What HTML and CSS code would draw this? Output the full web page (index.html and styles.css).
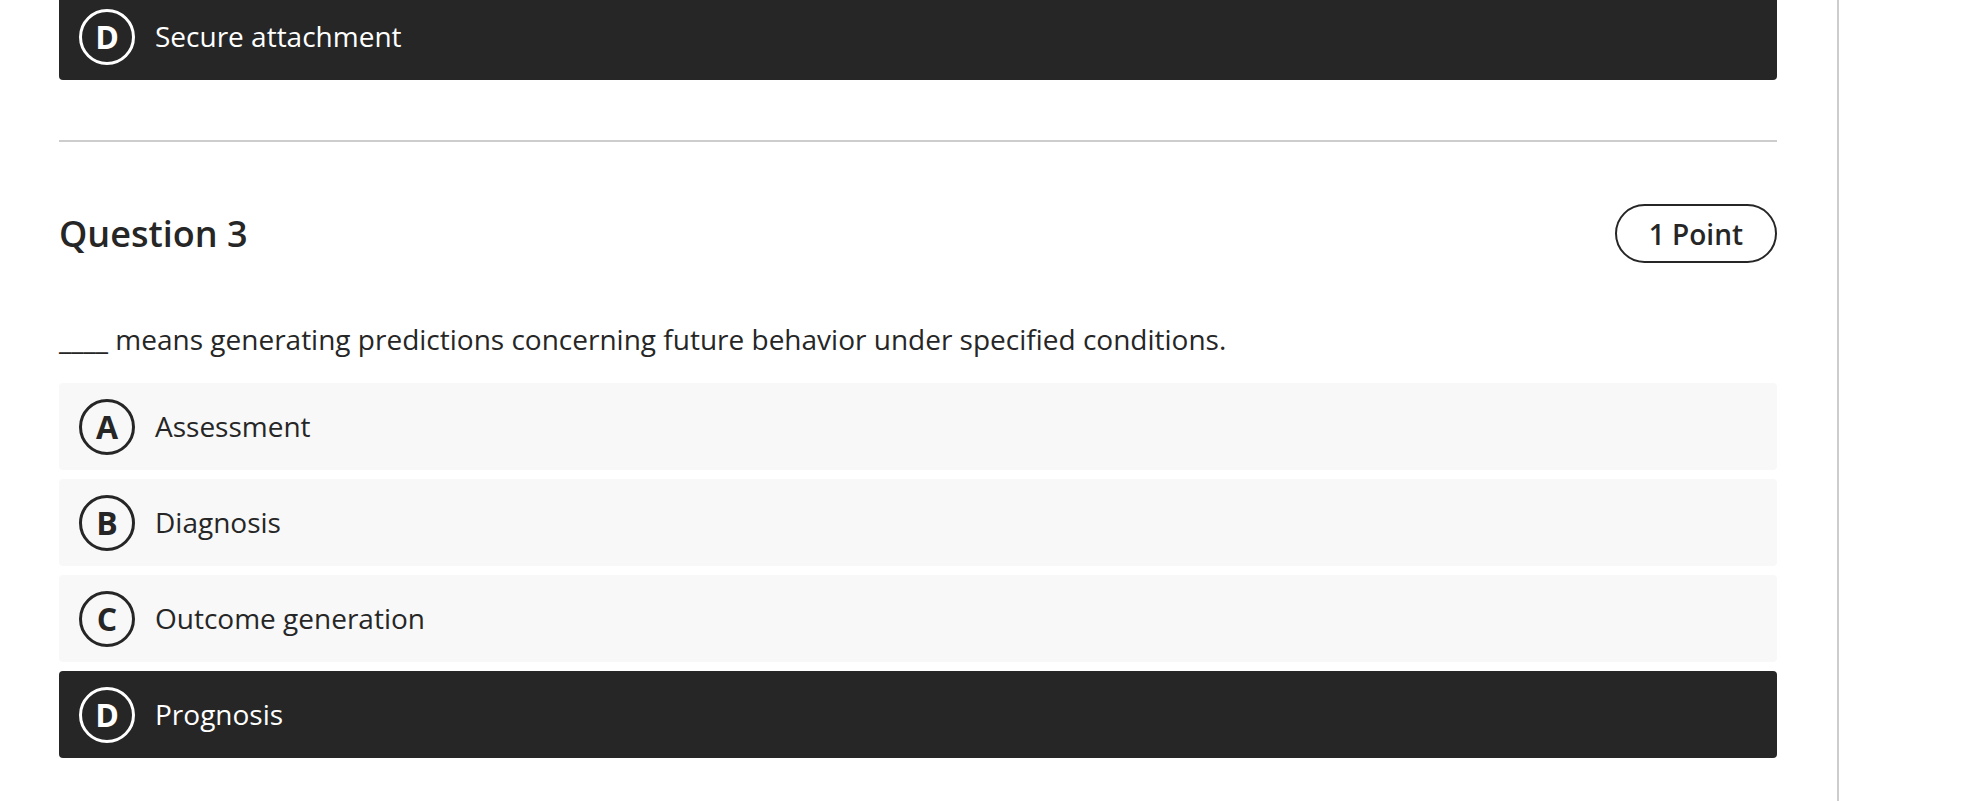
FILE: index.html
```html
<!DOCTYPE html>
<html lang="en">
<head>
    <meta charset="UTF-8">
    <meta name="viewport" content="width=device-width, initial-scale=1.0">
    <title>Quiz</title>
    <link rel="stylesheet" href="styles.css">
</head>
<body>
    <div class="page">
        <div class="content">
            <div class="question prev">
                <div class="options">
                    <div class="option selected">
                        <span class="letter">D</span>
                        <span class="label">Secure attachment</span>
                    </div>
                </div>
            </div>

            <hr class="divider">

            <div class="question">
                <div class="question-header">
                    <h2>Question 3</h2>
                    <span class="points">1 Point</span>
                </div>
                <p class="question-text">____ means generating predictions concerning future behavior under specified conditions.</p>
                <div class="options">
                    <div class="option">
                        <span class="letter">A</span>
                        <span class="label">Assessment</span>
                    </div>
                    <div class="option">
                        <span class="letter">B</span>
                        <span class="label">Diagnosis</span>
                    </div>
                    <div class="option">
                        <span class="letter">C</span>
                        <span class="label">Outcome generation</span>
                    </div>
                    <div class="option selected">
                        <span class="letter">D</span>
                        <span class="label">Prognosis</span>
                    </div>
                </div>
            </div>
        </div>
    </div>
</body>
</html>
```

FILE: styles.css
```css
html, body {
    margin: 0;
    padding: 0;
    background: #fff;
}
body {
    font-family: "Open Sans", "Noto Sans", sans-serif;
    color: #262626;
    overflow: hidden;
}
.page {
    display: flex;
    height: 801px;
}
.content {
    width: 1718px;
    padding: 0 60px 0 59px;
    border-right: 2px solid #cdcdcd;
    margin-top: -7px;
}
.options {
    display: flex;
    flex-direction: column;
    gap: 9px;
}
.option {
    display: flex;
    align-items: center;
    gap: 20px;
    height: 87px;
    padding-left: 20px;
    background-color: #f8f8f8;
    border-radius: 4px;
    font-size: 28px;
}
.option .label {
    padding-bottom: 2px;
}
.option.selected {
    background-color: #262626;
    color: #fff;
}
.letter {
    display: flex;
    align-items: center;
    justify-content: center;
    box-sizing: border-box;
    width: 56px;
    height: 56px;
    border: 3px solid #262626;
    border-radius: 50%;
    font-size: 32px;
    font-weight: 700;
}
.option.selected .letter {
    border-color: #fff;
}
.divider {
    border: 0;
    height: 2px;
    background-color: #cdcdcd;
    margin: 60px 0 62px;
}
.question-header {
    display: flex;
    align-items: center;
    justify-content: space-between;
}
.question-header h2 {
    margin: 0;
    font-size: 36px;
    font-weight: 600;
}
.points {
    box-sizing: border-box;
    height: 59px;
    padding: 0 32px;
    display: flex;
    align-items: center;
    border: 2px solid #262626;
    border-radius: 30px;
    font-size: 28px;
    font-weight: 600;
}
.question-text {
    margin: 56px 0 24px;
    font-size: 28px;
    line-height: 40px;
}
```
